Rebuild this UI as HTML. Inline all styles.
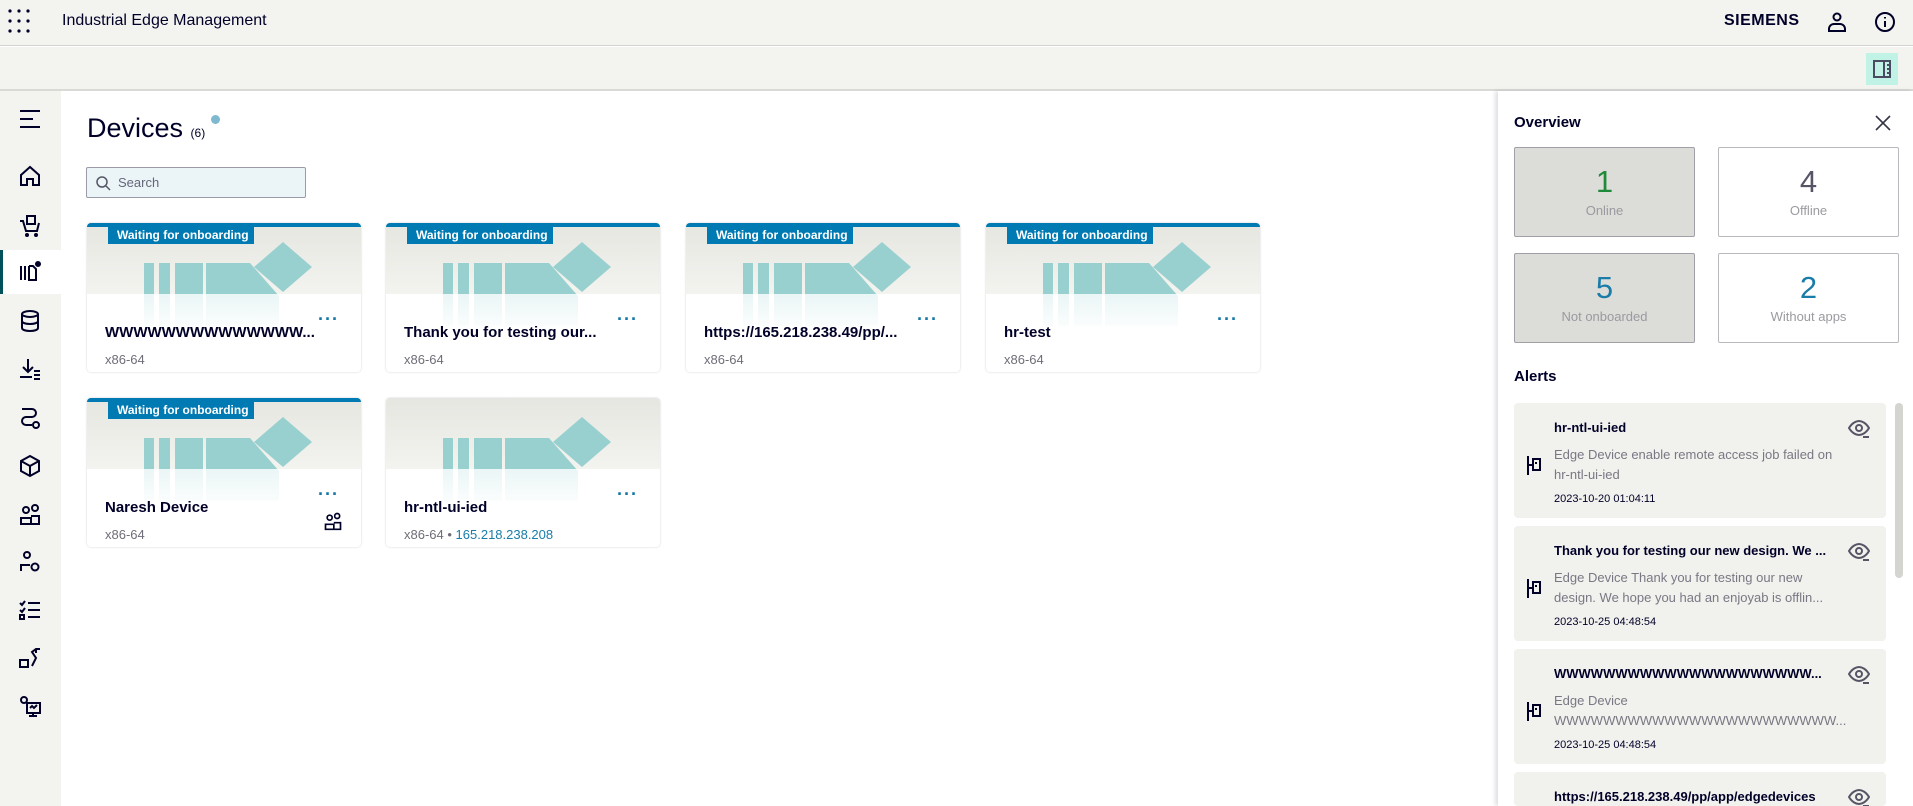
<!DOCTYPE html>
<html><head><meta charset="utf-8"><style>
*{box-sizing:border-box;margin:0;padding:0}
html{overflow:hidden;width:1913px;height:806px}
body{width:1913px;height:806px;overflow:hidden;background:#fff;font-family:"Liberation Sans",sans-serif;color:#000028;position:relative}
.hdr{position:absolute;left:0;top:0;width:1913px;height:46px;background:#f3f3f0;border-bottom:1px solid #d2d2ce}
.bar2{position:absolute;left:0;top:47px;width:1913px;height:44px;background:#f3f3f0;border-bottom:2px solid #d9d9d6}
.side{position:absolute;left:0;top:91px;width:61px;height:715px;background:#f3f3f0}
.ic{position:absolute;left:18px;width:24px;height:24px}
.card{position:absolute;width:274px;height:149px;border-radius:4px;background:#fff;box-shadow:0 0 2px rgba(0,0,40,.18);overflow:hidden}
.card .top{position:absolute;left:0;top:0;width:100%;height:71px;background:linear-gradient(#e6e6e1,#f3f3ef)}
.card svg.art{position:absolute;left:0;top:0}
.card .fade{position:absolute;left:0;top:71px;width:100%;height:40px;background:linear-gradient(rgba(255,255,255,.8),#fff)}
.card .blue{position:absolute;left:0;top:0;width:100%;height:4px;background:#007ab3}
.card .lbl{position:absolute;left:21px;top:4px;width:146px;height:17px;background:#007ab3;color:#fff;font-weight:bold;font-size:12px;line-height:16px;padding-left:9px}
.card .nm{position:absolute;left:18px;top:101px;font-size:15px;font-weight:bold;color:#000028;white-space:nowrap}
.card .sub{position:absolute;left:18px;top:129px;font-size:13px;color:#6e6e78}
.card .dots{position:absolute;right:22px;top:86px;font-size:18px;letter-spacing:1px;color:#1577a7;font-weight:bold}
.panel{position:absolute;left:1498px;top:91px;width:415px;height:715px;background:#fff;box-shadow:-3px 0 4px rgba(0,0,40,.12);overflow:hidden}
.tile{position:absolute;width:181px;height:90px;border:1px solid #b8b8be;border-radius:2px;text-align:center;background:#fff}
.tile.sel{background:#dcdcd8;border-color:#a0a0a8}
.tile b{display:block;font-weight:normal;font-size:31px;margin-top:17px;line-height:34px}
.tile span{display:block;font-size:13px;color:#9a9aa0;margin-top:4px}
.alert{position:absolute;left:16px;width:372px;height:115px;background:#f1f1ed;border-radius:4px;overflow:hidden}
.alert .t{position:absolute;left:40px;top:17px;font-size:13px;font-weight:bold;white-space:nowrap}
.alert .d{position:absolute;left:40px;top:42px;font-size:13px;color:#787884;line-height:20px;width:300px;white-space:nowrap}
.alert .ts{position:absolute;left:40px;top:90px;font-size:11px;color:#000028}
.alert .dev{position:absolute;left:12px;top:52px}
.alert .eye{position:absolute;left:334px;top:17px}
</style></head><body>
<div class="hdr">
 <svg style="position:absolute;left:6px;top:8px" width="26" height="26" viewBox="0 0 26 26" fill="#000028"><circle cx="4" cy="3" r="1.6"/><circle cx="13" cy="3" r="1.6"/><circle cx="22" cy="3" r="1.6"/><circle cx="4" cy="13" r="1.6"/><circle cx="13" cy="13" r="1.6"/><circle cx="22" cy="13" r="1.6"/><circle cx="4" cy="23" r="1.6"/><circle cx="13" cy="23" r="1.6"/><circle cx="22" cy="23" r="1.6"/></svg>
 <div style="position:absolute;left:62px;top:12px;font-size:16px">Industrial Edge Management</div>
 <div style="position:absolute;left:1724px;top:12px;font-size:16px;font-weight:bold;letter-spacing:.5px">SIEMENS</div>
 <svg style="position:absolute;left:1826px;top:11px" width="22" height="22" viewBox="0 0 22 22" fill="none" stroke="#000028" stroke-width="2"><circle cx="11" cy="6" r="3.5"/><path d="M3 20v-2a5 5 0 0 1 5-5h6a5 5 0 0 1 5 5v2z"/></svg>
 <svg style="position:absolute;left:1874px;top:11px" width="22" height="22" viewBox="0 0 22 22" fill="none" stroke="#000028" stroke-width="2"><circle cx="11" cy="11" r="9"/><path d="M11 10v6M11 6v1.5"/></svg>
</div>
<div class="bar2">
 <div style="position:absolute;left:1866px;top:6px;width:32px;height:32px;background:#c0f2e6"></div>
 <svg style="position:absolute;left:1872px;top:12px" width="20" height="20" viewBox="0 0 20 20" fill="none" stroke="#4a4a60" stroke-width="2"><rect x="2" y="2" width="16" height="16"/><path d="M12 2v16M15 6h2M15 10h2M15 14h2"/></svg>
</div>
<div class="side">
 <svg class="ic" style="top:16px" viewBox="0 0 24 24" stroke="#000028" stroke-width="2" fill="none"><path d="M2 4h20M2 12h13M2 20h20"/></svg>
 <svg class="ic" style="top:73px" viewBox="0 0 24 24" stroke="#000028" stroke-width="2" fill="none"><path d="M3 11l9-8 9 8v10h-6v-6h-6v6H3z"/></svg>
 <svg class="ic" style="top:122px" viewBox="0 0 24 24" stroke="#000028" stroke-width="2" fill="none"><path d="M2 8h3l3 10h11l2-8"/><rect x="9" y="3" width="8" height="8"/><circle cx="9" cy="22" r="1"/><circle cx="18" cy="22" r="1"/></svg>
 <div style="position:absolute;left:0;top:159px;width:61px;height:44px;background:#fff;border-left:3px solid #005159"></div>
 <svg class="ic" style="top:169px" viewBox="0 0 24 24" stroke="#000028" stroke-width="2" fill="none"><path d="M3 6v14M7 6v14M11 6v14h7V9l-3-3h-4"/><circle cx="20" cy="4" r="2" fill="#000028"/></svg>
 <svg class="ic" style="top:218px" viewBox="0 0 24 24" stroke="#000028" stroke-width="2" fill="none"><ellipse cx="12" cy="5" rx="8" ry="3"/><path d="M4 5v14c0 2 4 3 8 3s8-1 8-3V5M4 12c0 2 4 3 8 3s8-1 8-3"/></svg>
 <svg class="ic" style="top:266px" viewBox="0 0 24 24" stroke="#000028" stroke-width="2" fill="none"><path d="M10 2v13M5 10l5 5 5-5M2 20h12M16 14h6M16 18h6M16 22h6"/></svg>
 <svg class="ic" style="top:315px" viewBox="0 0 24 24" stroke="#000028" stroke-width="2" fill="none"><path d="M4 3h10a4 4 0 0 1 0 8H8a4 4 0 0 0 0 8h6"/><circle cx="18" cy="19" r="3"/></svg>
 <svg class="ic" style="top:363px" viewBox="0 0 24 24" stroke="#000028" stroke-width="2" fill="none"><path d="M12 2l9 5v10l-9 5-9-5V7zM3 7l9 5 9-5M12 12v10"/></svg>
 <svg class="ic" style="top:411px" viewBox="0 0 24 24" stroke="#000028" stroke-width="2" fill="none"><circle cx="8" cy="8" r="3"/><circle cx="17" cy="6" r="3"/><path d="M3 22v-6h10v6zM13 14h8v8h-8"/></svg>
 <svg class="ic" style="top:459px" viewBox="0 0 24 24" stroke="#000028" stroke-width="2" fill="none"><circle cx="9" cy="5" r="3"/><path d="M3 21v-6h9"/><circle cx="17" cy="17" r="3.5"/></svg>
 <svg class="ic" style="top:507px" viewBox="0 0 24 24" stroke="#000028" stroke-width="2" fill="none"><path d="M2 5l2 2 3-4M2 12l2 2 3-4M10 5h12M10 12h12M10 19h12"/><rect x="2" y="17" width="4" height="4"/></svg>
 <svg class="ic" style="top:555px" viewBox="0 0 24 24" stroke="#000028" stroke-width="2" fill="none"><rect x="2" y="14" width="8" height="7"/><path d="M14 20l4-8-4-6 4-3h4M18 3v4"/></svg>
 <svg class="ic" style="top:603px" viewBox="0 0 24 24" stroke="#000028" stroke-width="2" fill="none"><circle cx="6" cy="6" r="3"/><rect x="9" y="9" width="13" height="10"/><path d="M15 19v3M11 22h8M12 14l2-2 2 2 3-3"/></svg>
</div>

<div style="position:absolute;left:87px;top:113px;font-size:27px">Devices <span style="font-size:12px">(6)</span></div>
<div style="position:absolute;left:211px;top:115px;width:9px;height:9px;border-radius:50%;background:#7fb9cf"></div>
<div style="position:absolute;left:86px;top:167px;width:220px;height:31px;background:#ebf5f7;border:1px solid #9a9aa8;border-radius:2px">
 <svg style="position:absolute;left:8px;top:7px" width="16" height="16" viewBox="0 0 16 16" fill="none" stroke="#555566" stroke-width="1.5"><circle cx="7" cy="7" r="5"/><path d="M11 11l4 4"/></svg>
 <span style="position:absolute;left:31px;top:7px;font-size:13px;color:#66667a">Search</span>
</div>

<div class="card" style="left:87px;top:223px"><div class="top"></div><svg class="art" width="274" height="111"><g fill="#98d0d0"><rect x="57" y="40" width="10" height="63"/><rect x="72" y="40" width="11" height="63"/><rect x="88" y="40" width="28" height="63"/><polygon points="119,40 163,40 192,73 192,103 119,103"/><polygon points="196,19 225,44 196,69 167,44"/></g></svg><div class="fade"></div><div class="blue"></div><div class="lbl">Waiting for onboarding</div><div class="nm">WWWWWWWWWWWWWW...</div><div class="sub">x86-64</div><div class="dots">···</div></div>
<div class="card" style="left:386px;top:223px"><div class="top"></div><svg class="art" width="274" height="111"><g fill="#98d0d0"><rect x="57" y="40" width="10" height="63"/><rect x="72" y="40" width="11" height="63"/><rect x="88" y="40" width="28" height="63"/><polygon points="119,40 163,40 192,73 192,103 119,103"/><polygon points="196,19 225,44 196,69 167,44"/></g></svg><div class="fade"></div><div class="blue"></div><div class="lbl">Waiting for onboarding</div><div class="nm">Thank you for testing our...</div><div class="sub">x86-64</div><div class="dots">···</div></div>
<div class="card" style="left:686px;top:223px"><div class="top"></div><svg class="art" width="274" height="111"><g fill="#98d0d0"><rect x="57" y="40" width="10" height="63"/><rect x="72" y="40" width="11" height="63"/><rect x="88" y="40" width="28" height="63"/><polygon points="119,40 163,40 192,73 192,103 119,103"/><polygon points="196,19 225,44 196,69 167,44"/></g></svg><div class="fade"></div><div class="blue"></div><div class="lbl">Waiting for onboarding</div><div class="nm">https://165.218.238.49/pp/...</div><div class="sub">x86-64</div><div class="dots">···</div></div>
<div class="card" style="left:986px;top:223px"><div class="top"></div><svg class="art" width="274" height="111"><g fill="#98d0d0"><rect x="57" y="40" width="10" height="63"/><rect x="72" y="40" width="11" height="63"/><rect x="88" y="40" width="28" height="63"/><polygon points="119,40 163,40 192,73 192,103 119,103"/><polygon points="196,19 225,44 196,69 167,44"/></g></svg><div class="fade"></div><div class="blue"></div><div class="lbl">Waiting for onboarding</div><div class="nm">hr-test</div><div class="sub">x86-64</div><div class="dots">···</div></div>
<div class="card" style="left:87px;top:398px"><div class="top"></div><svg class="art" width="274" height="111"><g fill="#98d0d0"><rect x="57" y="40" width="10" height="63"/><rect x="72" y="40" width="11" height="63"/><rect x="88" y="40" width="28" height="63"/><polygon points="119,40 163,40 192,73 192,103 119,103"/><polygon points="196,19 225,44 196,69 167,44"/></g></svg><div class="fade"></div><div class="blue"></div><div class="lbl">Waiting for onboarding</div><div class="nm">Naresh Device</div><div class="sub">x86-64</div><div class="dots">···</div>
 <svg style="position:absolute;left:236px;top:113px" width="20" height="20" viewBox="0 0 24 24" stroke="#000028" stroke-width="2" fill="none"><circle cx="8" cy="8" r="3"/><circle cx="17" cy="6" r="3"/><path d="M3 22v-6h10v6zM13 14h8v8h-8"/></svg></div>
<div class="card" style="left:386px;top:398px"><div class="top"></div><svg class="art" width="274" height="111"><g fill="#98d0d0"><rect x="57" y="40" width="10" height="63"/><rect x="72" y="40" width="11" height="63"/><rect x="88" y="40" width="28" height="63"/><polygon points="119,40 163,40 192,73 192,103 119,103"/><polygon points="196,19 225,44 196,69 167,44"/></g></svg><div class="fade"></div><div class="nm">hr-ntl-ui-ied</div><div class="sub">x86-64 • <span style="color:#1a7ca8">165.218.238.208</span></div><div class="dots">···</div></div>

<div class="panel">
 <div style="position:absolute;left:16px;top:23px;font-size:15px;font-weight:bold">Overview</div>
 <svg style="position:absolute;left:377px;top:24px" width="16" height="16" viewBox="0 0 16 16" stroke="#333344" stroke-width="1.6"><path d="M1 1l14 14M15 1L1 15"/></svg>
 <div class="tile sel" style="left:16px;top:56px"><b style="color:#1f8a3a">1</b><span>Online</span></div>
 <div class="tile" style="left:220px;top:56px"><b style="color:#555566">4</b><span>Offline</span></div>
 <div class="tile sel" style="left:16px;top:162px"><b style="color:#1a7ca8">5</b><span>Not onboarded</span></div>
 <div class="tile" style="left:220px;top:162px"><b style="color:#1a7ca8">2</b><span>Without apps</span></div>
 <div style="position:absolute;left:16px;top:277px;font-size:15px;font-weight:bold">Alerts</div>
 <div style="position:absolute;left:397px;top:312px;width:8px;height:175px;background:#d4d4d0;border-radius:4px"></div>

 <div class="alert" style="top:312px">
  <svg class="dev" width="16" height="20" viewBox="0 0 16 20" fill="none" stroke="#000028" stroke-width="2"><path d="M2 1v19M2 10h4"/><rect x="7" y="4" width="7" height="11"/><path d="M10 7v2"/></svg>
  <div class="t">hr-ntl-ui-ied</div>
  <div class="d">Edge Device enable remote access job failed on<br>hr-ntl-ui-ied</div>
  <div class="ts">2023-10-20 01:04:11</div>
  <svg class="eye" width="22" height="18" viewBox="0 0 22 18" fill="none" stroke="#555566" stroke-width="2"><path d="M1 8c3-5 7-7 10-7s7 2 10 7c-3 5-7 7-10 7S4 13 1 8z"/><circle cx="11" cy="8" r="3"/><path d="M15 17h6"/></svg>
 </div>
 <div class="alert" style="top:435px">
  <svg class="dev" width="16" height="20" viewBox="0 0 16 20" fill="none" stroke="#000028" stroke-width="2"><path d="M2 1v19M2 10h4"/><rect x="7" y="4" width="7" height="11"/><path d="M10 7v2"/></svg>
  <div class="t">Thank you for testing our new design. We ...</div>
  <div class="d">Edge Device Thank you for testing our new<br>design. We hope you had an enjoyab is offlin...</div>
  <div class="ts">2023-10-25 04:48:54</div>
  <svg class="eye" width="22" height="18" viewBox="0 0 22 18" fill="none" stroke="#555566" stroke-width="2"><path d="M1 8c3-5 7-7 10-7s7 2 10 7c-3 5-7 7-10 7S4 13 1 8z"/><circle cx="11" cy="8" r="3"/><path d="M15 17h6"/></svg>
 </div>
 <div class="alert" style="top:558px">
  <svg class="dev" width="16" height="20" viewBox="0 0 16 20" fill="none" stroke="#000028" stroke-width="2"><path d="M2 1v19M2 10h4"/><rect x="7" y="4" width="7" height="11"/><path d="M10 7v2"/></svg>
  <div class="t">WWWWWWWWWWWWWWWWWWWWW...</div>
  <div class="d">Edge Device<br>WWWWWWWWWWWWWWWWWWWWWWW...</div>
  <div class="ts">2023-10-25 04:48:54</div>
  <svg class="eye" width="22" height="18" viewBox="0 0 22 18" fill="none" stroke="#555566" stroke-width="2"><path d="M1 8c3-5 7-7 10-7s7 2 10 7c-3 5-7 7-10 7S4 13 1 8z"/><circle cx="11" cy="8" r="3"/><path d="M15 17h6"/></svg>
 </div>
 <div class="alert" style="top:681px;height:34px">
  <div class="t">https://165.218.238.49/pp/app/edgedevices</div>
  <svg class="eye" width="22" height="18" viewBox="0 0 22 18" fill="none" stroke="#555566" stroke-width="2"><path d="M1 8c3-5 7-7 10-7s7 2 10 7c-3 5-7 7-10 7S4 13 1 8z"/><circle cx="11" cy="8" r="3"/><path d="M15 17h6"/></svg>
 </div>
</div>
</body></html>
